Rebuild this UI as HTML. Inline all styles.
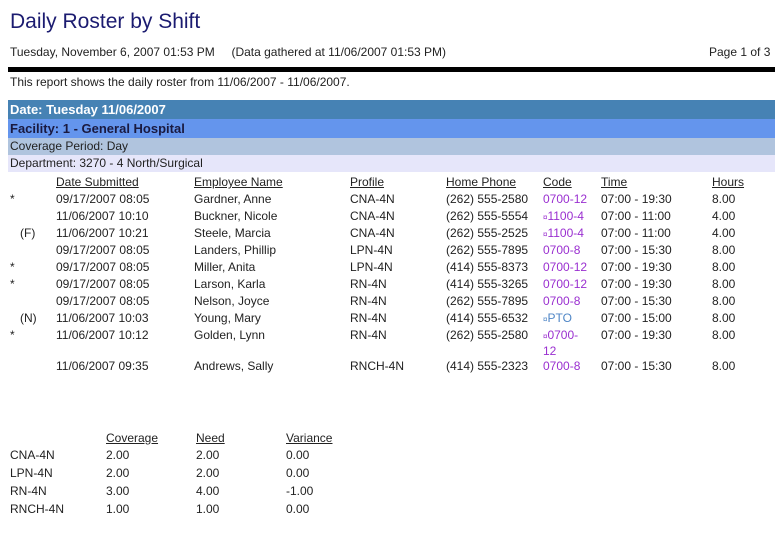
<!DOCTYPE html>
<html><head><meta charset="utf-8"><style>
body{margin:0;width:776px;height:533px;background:#fff;font-family:"Liberation Sans",Arial,sans-serif;font-size:12px;color:#222;position:relative;overflow:hidden}
.a{position:absolute;white-space:nowrap;line-height:17px}
.u{text-decoration:underline}
.c{color:#9a2fd0}
.p{color:#4f86c6}
.bar{position:absolute;left:8px;width:767px}
</style></head><body>
<div class="a" style="left:10px;top:8px;font-size:21px;line-height:28px;color:#1b1b70">Daily Roster by Shift</div>
<div class="a" style="left:10px;top:44px">Tuesday, November 6, 2007 01:53 PM&nbsp;&nbsp;&nbsp;&nbsp;&nbsp;(Data gathered at 11/06/2007 01:53 PM)</div>
<div class="a" style="left:709px;top:44px">Page 1 of 3</div>
<div class="bar" style="top:67px;height:5px;background:#000"></div>
<div class="a" style="left:10px;top:74px">This report shows the daily roster from 11/06/2007 - 11/06/2007.</div>
<div class="bar" style="top:100px;height:19px;background:#4682b4"></div>
<div class="a" style="left:10px;top:101px;color:#fff;font-weight:bold;font-size:13px">Date: Tuesday 11/06/2007</div>
<div class="bar" style="top:119px;height:19px;background:#6495ed"></div>
<div class="a" style="left:10px;top:120px;color:#1a1a40;font-weight:bold;font-size:13px">Facility: 1 - General Hospital</div>
<div class="bar" style="top:138px;height:17px;background:#b0c4de"></div>
<div class="a" style="left:10px;top:138px">Coverage Period: Day</div>
<div class="bar" style="top:155px;height:17px;background:#e6e6fa"></div>
<div class="a" style="left:10px;top:155px">Department: 3270 - 4 North/Surgical</div>

<div class="a u" style="left:56px;top:174px">Date Submitted</div>
<div class="a u" style="left:194px;top:174px">Employee Name</div>
<div class="a u" style="left:350px;top:174px">Profile</div>
<div class="a u" style="left:446px;top:174px">Home Phone</div>
<div class="a u" style="left:543px;top:174px">Code</div>
<div class="a u" style="left:601px;top:174px">Time</div>
<div class="a u" style="left:712px;top:174px">Hours</div>

<div class="a" style="left:10px;top:191px">*</div><div class="a" style="left:56px;top:191px">09/17/2007 08:05</div><div class="a" style="left:194px;top:191px">Gardner, Anne</div><div class="a" style="left:350px;top:191px">CNA-4N</div><div class="a" style="left:446px;top:191px">(262) 555-2580</div><div class="a c" style="left:543px;top:191px">0700-12</div><div class="a" style="left:601px;top:191px">07:00 - 19:30</div><div class="a" style="left:712px;top:191px">8.00</div>

<div class="a" style="left:56px;top:208px">11/06/2007 10:10</div><div class="a" style="left:194px;top:208px">Buckner, Nicole</div><div class="a" style="left:350px;top:208px">CNA-4N</div><div class="a" style="left:446px;top:208px">(262) 555-5554</div><div class="a c" style="left:543px;top:208px"><span style="font-size:8px">¤</span>1100-4</div><div class="a" style="left:601px;top:208px">07:00 - 11:00</div><div class="a" style="left:712px;top:208px">4.00</div>

<div class="a" style="left:20px;top:225px">(F)</div><div class="a" style="left:56px;top:225px">11/06/2007 10:21</div><div class="a" style="left:194px;top:225px">Steele, Marcia</div><div class="a" style="left:350px;top:225px">CNA-4N</div><div class="a" style="left:446px;top:225px">(262) 555-2525</div><div class="a c" style="left:543px;top:225px"><span style="font-size:8px">¤</span>1100-4</div><div class="a" style="left:601px;top:225px">07:00 - 11:00</div><div class="a" style="left:712px;top:225px">4.00</div>

<div class="a" style="left:56px;top:242px">09/17/2007 08:05</div><div class="a" style="left:194px;top:242px">Landers, Phillip</div><div class="a" style="left:350px;top:242px">LPN-4N</div><div class="a" style="left:446px;top:242px">(262) 555-7895</div><div class="a c" style="left:543px;top:242px">0700-8</div><div class="a" style="left:601px;top:242px">07:00 - 15:30</div><div class="a" style="left:712px;top:242px">8.00</div>

<div class="a" style="left:10px;top:259px">*</div><div class="a" style="left:56px;top:259px">09/17/2007 08:05</div><div class="a" style="left:194px;top:259px">Miller, Anita</div><div class="a" style="left:350px;top:259px">LPN-4N</div><div class="a" style="left:446px;top:259px">(414) 555-8373</div><div class="a c" style="left:543px;top:259px">0700-12</div><div class="a" style="left:601px;top:259px">07:00 - 19:30</div><div class="a" style="left:712px;top:259px">8.00</div>

<div class="a" style="left:10px;top:276px">*</div><div class="a" style="left:56px;top:276px">09/17/2007 08:05</div><div class="a" style="left:194px;top:276px">Larson, Karla</div><div class="a" style="left:350px;top:276px">RN-4N</div><div class="a" style="left:446px;top:276px">(414) 555-3265</div><div class="a c" style="left:543px;top:276px">0700-12</div><div class="a" style="left:601px;top:276px">07:00 - 19:30</div><div class="a" style="left:712px;top:276px">8.00</div>

<div class="a" style="left:56px;top:293px">09/17/2007 08:05</div><div class="a" style="left:194px;top:293px">Nelson, Joyce</div><div class="a" style="left:350px;top:293px">RN-4N</div><div class="a" style="left:446px;top:293px">(262) 555-7895</div><div class="a c" style="left:543px;top:293px">0700-8</div><div class="a" style="left:601px;top:293px">07:00 - 15:30</div><div class="a" style="left:712px;top:293px">8.00</div>

<div class="a" style="left:20px;top:310px">(N)</div><div class="a" style="left:56px;top:310px">11/06/2007 10:03</div><div class="a" style="left:194px;top:310px">Young, Mary</div><div class="a" style="left:350px;top:310px">RN-4N</div><div class="a" style="left:446px;top:310px">(414) 555-6532</div><div class="a p" style="left:543px;top:310px"><span style="font-size:8px">¤</span>PTO</div><div class="a" style="left:601px;top:310px">07:00 - 15:00</div><div class="a" style="left:712px;top:310px">8.00</div>

<div class="a" style="left:10px;top:327px">*</div><div class="a" style="left:56px;top:327px">11/06/2007 10:12</div><div class="a" style="left:194px;top:327px">Golden, Lynn</div><div class="a" style="left:350px;top:327px">RN-4N</div><div class="a" style="left:446px;top:327px">(262) 555-2580</div><div class="a c" style="left:543px;top:327px;line-height:15px;padding-top:1px"><span style="font-size:8px">¤</span>0700-<br>12</div><div class="a" style="left:601px;top:327px">07:00 - 19:30</div><div class="a" style="left:712px;top:327px">8.00</div>

<div class="a" style="left:56px;top:358px">11/06/2007 09:35</div><div class="a" style="left:194px;top:358px">Andrews, Sally</div><div class="a" style="left:350px;top:358px">RNCH-4N</div><div class="a" style="left:446px;top:358px">(414) 555-2323</div><div class="a c" style="left:543px;top:358px">0700-8</div><div class="a" style="left:601px;top:358px">07:00 - 15:30</div><div class="a" style="left:712px;top:358px">8.00</div>

<div class="a u" style="left:106px;top:430px">Coverage</div><div class="a u" style="left:196px;top:430px">Need</div><div class="a u" style="left:286px;top:430px">Variance</div>
<div class="a" style="left:10px;top:447px">CNA-4N</div><div class="a" style="left:106px;top:447px">2.00</div><div class="a" style="left:196px;top:447px">2.00</div><div class="a" style="left:286px;top:447px">0.00</div>
<div class="a" style="left:10px;top:465px">LPN-4N</div><div class="a" style="left:106px;top:465px">2.00</div><div class="a" style="left:196px;top:465px">2.00</div><div class="a" style="left:286px;top:465px">0.00</div>
<div class="a" style="left:10px;top:483px">RN-4N</div><div class="a" style="left:106px;top:483px">3.00</div><div class="a" style="left:196px;top:483px">4.00</div><div class="a" style="left:286px;top:483px">-1.00</div>
<div class="a" style="left:10px;top:501px">RNCH-4N</div><div class="a" style="left:106px;top:501px">1.00</div><div class="a" style="left:196px;top:501px">1.00</div><div class="a" style="left:286px;top:501px">0.00</div>
</body></html>
